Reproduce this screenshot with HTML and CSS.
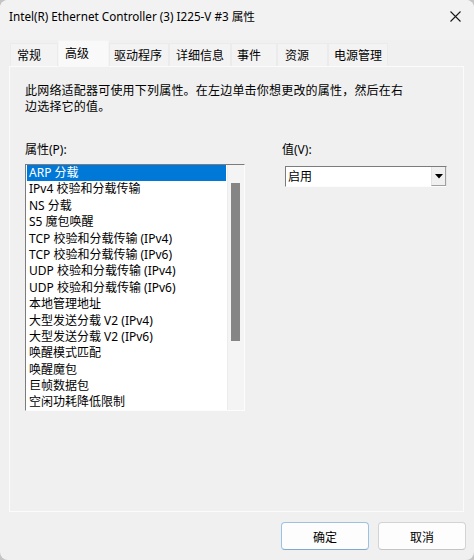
FILE: index.html
```html
<!DOCTYPE html>
<html lang="zh-CN">
<head>
<meta charset="utf-8">
<title>属性</title>
<link rel="stylesheet" href="styles.css">
</head>
<body>
<div class="window">
  <div class="titlebar">
    <span class="title">Intel(R) Ethernet Controller (3) I225-V #3 属性</span>
    <svg class="close" width="11" height="11" viewBox="0 0 11 11"><path d="M0.5 0.5 L10.5 10.5 M10.5 0.5 L0.5 10.5" stroke="#1a1a1a" stroke-width="1.1" fill="none"/></svg>
  </div>
  <div class="tabs">
    <div class="tab t1">常规</div>
    <div class="tab t2 active">高级</div>
    <div class="tab t3">驱动程序</div>
    <div class="tab t4">详细信息</div>
    <div class="tab t5">事件</div>
    <div class="tab t6">资源</div>
    <div class="tab t7">电源管理</div>
  </div>
  <div class="panel">
    <p class="desc">此网络适配器可使用下列属性。在左边单击你想更改的属性，然后在右<br>边选择它的值。</p>
    <div class="props">
      <div class="col-left">
        <div class="label">属性(P):</div>
        <div class="listbox">
          <ul class="items">
            <li class="sel">ARP 分载</li>
            <li>IPv4 校验和分载传输</li>
            <li>NS 分载</li>
            <li>S5 魔包唤醒</li>
            <li>TCP 校验和分载传输 (IPv4)</li>
            <li>TCP 校验和分载传输 (IPv6)</li>
            <li>UDP 校验和分载传输 (IPv4)</li>
            <li>UDP 校验和分载传输 (IPv6)</li>
            <li>本地管理地址</li>
            <li>大型发送分载 V2 (IPv4)</li>
            <li>大型发送分载 V2 (IPv6)</li>
            <li>唤醒模式匹配</li>
            <li>唤醒魔包</li>
            <li>巨帧数据包</li>
            <li>空闲功耗降低限制</li>
          </ul>
          <div class="scrollbar"><div class="thumb"></div></div>
        </div>
      </div>
      <div class="col-right">
        <div class="label">值(V):</div>
        <div class="select">
          <span class="value">启用</span>
          <div class="arrow"><svg width="8" height="5" viewBox="0 0 8 5"><path d="M0 0 H8 L4 4.5 Z" fill="#000"/></svg></div>
        </div>
      </div>
    </div>
  </div>
  <div class="footer">
    <button class="btn default">确定</button>
    <button class="btn">取消</button>
  </div>
</div>
</body>
</html>
```

FILE: styles.css
```css
html, body {
  margin: 0;
  padding: 0;
}
body {
  width: 474px;
  height: 560px;
  background: #c4c4c4;
  font-family: "Noto Sans", "Noto Sans CJK SC", sans-serif;
  font-size: 12px;
  color: #000;
}
.window {
  width: 474px;
  height: 560px;
  background: #f0f0f0;
  border-radius: 8px;
  overflow: hidden;
  display: flex;
  flex-direction: column;
}
.titlebar {
  height: 40px;
  display: flex;
  align-items: flex-start;
  padding-left: 9px;
  background: #f2f2f2;
}
.title {
  margin-top: 8px;
  line-height: 16px;
  font-size: 11.7px;
  white-space: nowrap;
}
.close {
  margin-left: auto;
  margin-right: 13px;
  margin-top: 11px;
}
.tabs {
  height: 26px;
  display: flex;
  align-items: flex-end;
  padding-left: 10px;
  position: relative;
  z-index: 1;
}
.tab {
  height: 23px;
  line-height: 22px;
  box-sizing: border-box;
  background: #f3f3f3;
  border: 1px solid #ebebeb;
  border-bottom: none;
  white-space: nowrap;
  font-family: "Noto Sans CJK SC", sans-serif;
}
.tab.active {
  height: 27px;
  margin-bottom: -1px;
  line-height: 23px;
  background: #f9f9f9;
  border-color: #f4f4f4;
}
.t1 { width: 48px; padding-left: 6px; }
.t2 { width: 51px; padding-left: 6px; }
.t3 { width: 60px; padding-left: 4px; }
.t4 { width: 62px; padding-left: 6px; }
.t5 { width: 46px; padding-left: 5px; }
.t6 { width: 51px; padding-left: 7px; }
.t7 { width: 60px; padding-left: 5px; }
.panel {
  margin: 0 10px 0 9px;
  height: 446px;
  box-sizing: border-box;
  border: 1px solid #fbfbfb;
  padding: 15px 0 0 15px;
  background: #f0f0f0;
}
.desc {
  margin: 0;
  line-height: 16px;
  font-size: 12px;
  letter-spacing: 0.2px;
  font-family: "Noto Sans CJK SC", sans-serif;
}
.props {
  display: flex;
  margin-top: 28px;
}
.col-left {
  width: 220px;
}
.col-right {
  margin-left: 37px;
}
.label {
  line-height: 16px;
  height: 16px;
}
.listbox {
  margin-top: 6px;
  width: 220px;
  height: 247px;
  box-sizing: border-box;
  border: 1px solid;
  border-color: #7c7c7c #fcfcfc #fcfcfc #7c7c7c;
  background: #fff;
  display: flex;
}
.items {
  list-style: none;
  margin: 0;
  padding: 0 1px;
  width: 201px;
  box-sizing: border-box;
}
.items li {
  line-height: 16.4px;
  height: 16.4px;
  padding-left: 2px;
  white-space: nowrap;
  overflow: hidden;
}
.items li.sel {
  background: #0078d7;
  color: #fff;
}
.scrollbar {
  width: 17px;
  background: #f4f4f4;
  border-left: 1px solid #ececec;
  box-sizing: border-box;
}
.thumb {
  margin-top: 18px;
  margin-left: 3px;
  width: 9px;
  height: 158px;
  background: #858585;
}
.select {
  margin-top: 8px;
  margin-left: 3px;
  width: 162px;
  height: 21px;
  box-sizing: border-box;
  border: 1px solid;
  border-color: #7c7c7c #e6e6e6 #fcfcfc #7c7c7c;
  background: #fff;
  display: flex;
  align-items: center;
}
.value {
  padding-left: 2px;
  line-height: 19px;
}
.arrow {
  margin-left: auto;
  width: 15px;
  height: 19px;
  box-sizing: border-box;
  border-left: 1px solid #e3e3e3;
  border-right: 1px solid #a0a0a0;
  border-bottom: 1px solid #a0a0a0;
  background: #f0f0f0;
  display: flex;
  align-items: center;
  justify-content: center;
}
.footer {
  display: flex;
  justify-content: flex-end;
  gap: 9px;
  padding: 10px 8px 0 0;
}
.btn {
  width: 88px;
  height: 28px;
  box-sizing: border-box;
  border: 1px solid #d3d3d3;
  border-bottom-color: #c4c4c4;
  border-radius: 4px;
  background: #fdfdfd;
  font-family: "Noto Sans CJK SC", sans-serif;
  font-size: 12px;
  color: #000;
  padding: 0;
}
.btn.default {
  border-color: #9dc1e4;
  border-bottom-color: #7ea9d3;
}
```
